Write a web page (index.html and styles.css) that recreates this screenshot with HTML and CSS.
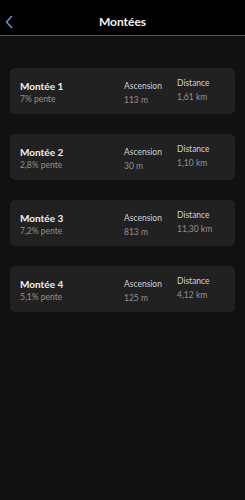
FILE: index.html
```html
<!DOCTYPE html>
<html lang="fr">
<head>
<meta charset="utf-8">
<link rel="stylesheet" href="styles.css">
</head>
<body>
<header class="topbar">
  <svg class="back" width="8" height="14" viewBox="0 0 8 14"><path d="M6.5 1.5 L1.5 7 L6.5 12.5" fill="none" stroke="#6f8fd0" stroke-width="1.6" stroke-linecap="round" stroke-linejoin="round"/></svg>
  <h1 class="title">Montées</h1>
</header>
<main class="list">
  <div class="card">
    <div class="name"><div class="n">Montée 1</div><div class="sub">7% pente</div></div>
    <div class="col asc"><div class="lbl">Ascension</div><div class="val">113 m</div></div>
    <div class="col dist"><div class="lbl">Distance</div><div class="val">1,61 km</div></div>
  </div>
  <div class="card">
    <div class="name"><div class="n">Montée 2</div><div class="sub">2,8% pente</div></div>
    <div class="col asc"><div class="lbl">Ascension</div><div class="val">30 m</div></div>
    <div class="col dist"><div class="lbl">Distance</div><div class="val">1,10 km</div></div>
  </div>
  <div class="card">
    <div class="name"><div class="n">Montée 3</div><div class="sub">7,2% pente</div></div>
    <div class="col asc"><div class="lbl">Ascension</div><div class="val">813 m</div></div>
    <div class="col dist"><div class="lbl">Distance</div><div class="val">11,30 km</div></div>
  </div>
  <div class="card">
    <div class="name"><div class="n">Montée 4</div><div class="sub">5,1% pente</div></div>
    <div class="col asc"><div class="lbl">Ascension</div><div class="val">125 m</div></div>
    <div class="col dist"><div class="lbl">Distance</div><div class="val">4,12 km</div></div>
  </div>
</main>
</body>
</html>
```
FILE: styles.css
```css
html, body {
  margin: 0;
  padding: 0;
  background: #111111;
  font-family: "Lato", "Liberation Sans", sans-serif;
  color: #e6e6e6;
  height: 100%;
}
.topbar {
  position: relative;
  height: 35px;
  background: #000;
  border-bottom: 1px solid #4e5c6c;
  display: flex;
  align-items: center;
  justify-content: center;
}
.back {
  position: absolute;
  left: 5px;
  top: 15px;
}
.title {
  margin: 0;
  font-size: 12px;
  font-weight: 700;
  color: #f2f2f2;
  padding-top: 7px;
}
.list {
  display: flex;
  flex-direction: column;
  gap: 20px;
  padding: 32px 10px 0 10px;
}
.card {
  height: 46px;
  background: #212121;
  border-radius: 5px;
  display: flex;
  align-items: center;
  padding-left: 10px;
  box-sizing: border-box;
}
.name {
  flex: 1;
  margin-top: 1px;
}
.n {
  font-size: 10px;
  font-weight: 700;
  color: #f0f0f0;
  line-height: 12px;
}
.sub {
  font-size: 8.5px;
  color: #929292;
  line-height: 10px;
  margin-top: 2px;
}
.col {
  width: 53px;
}
.dist {
  width: 58px;
  margin-top: -3px;
}
.asc {
  margin-top: 3px;
}
.lbl {
  font-size: 8.5px;
  color: #d0d0d0;
  line-height: 10px;
}
.val {
  font-size: 8.5px;
  color: #929292;
  line-height: 10px;
  margin-top: 4px;
}
```
